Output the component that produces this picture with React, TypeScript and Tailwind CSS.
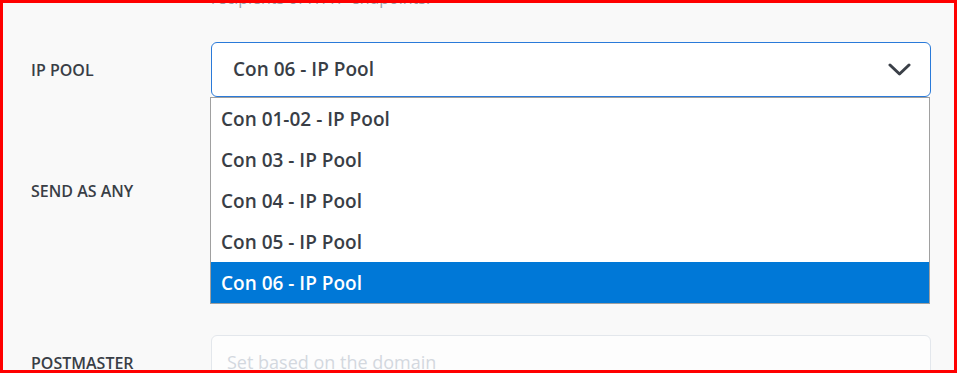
import React from "react";

const pools = [
   "Con 01-02 - IP Pool",
   "Con 03 - IP Pool",
   "Con 04 - IP Pool",
   "Con 05 - IP Pool",
   "Con 06 - IP Pool",
];

function Chevron() {
   return (
      <svg width="23" height="14" viewBox="0 0 23 14" fill="none">
         <polyline points="2,2 11.5,11 21,2" stroke="#3b4048" strokeWidth="3" strokeLinecap="round" strokeLinejoin="round" />
      </svg>
   );
}

export default function App() {
   const selected = "Con 06 - IP Pool";
   return (
      <div className="h-[373px] w-[957px] overflow-hidden border-[3px] border-[#ff0000] bg-[#f9f9f9] font-['Open_Sans',sans-serif] text-[#393e46]">
         {/* tail of the previous field's help text */}
         <div className="mt-[-17px] h-6 pl-[208px] text-[16px] leading-6 text-[#9aa1ab]">
            recipients of HTTP endpoints.
         </div>

         {/* IP POOL */}
         <div className="mt-[32px] flex items-center pr-[23px]">
            <div className="w-[208px] pl-[28px] text-[16px] font-semibold">IP POOL</div>
            <div className="relative flex-1">
               <div className="flex h-[55px] items-center justify-between rounded-[6px] border border-[#2a7ad9] bg-white pl-[21px] pr-[19px]">
                  <span className="text-[19px] font-semibold">{selected}</span>
                  <Chevron />
               </div>
               <ul className="absolute left-[-1px] right-[1px] top-full z-10 border border-[#a0a0a0] bg-white">
                  {pools.map((p) => (
                     <li
                        key={p}
                        className={
                           p === selected
                              ? "flex h-[41px] items-center bg-[#0078d7] pl-[10px] pt-px text-[19px] font-semibold text-white"
                              : "flex h-[41px] items-center pl-[10px] pt-px text-[19px] font-semibold"
                        }
                     >
                        {p}
                     </li>
                  ))}
               </ul>
            </div>
         </div>

         {/* SEND AS ANY */}
         <div className="mt-[66px] flex h-[55px] items-center pr-[23px]">
            <div className="w-[208px] pl-[28px] text-[16px] font-semibold">SEND AS ANY</div>
            <div className="flex-1" />
         </div>

         {/* POSTMASTER */}
         <div className="mt-[117px] flex items-center pr-[23px]">
            <div className="w-[208px] pl-[28px] text-[16px] font-semibold">POSTMASTER</div>
            <div className="flex h-[55px] flex-1 items-center rounded-[6px] border border-[#e3e7ec] bg-[#fdfdfd] pl-[15px]">
               <span className="text-[18px] text-[#d3d8df]">Set based on the domain</span>
            </div>
         </div>
      </div>
   );
}
